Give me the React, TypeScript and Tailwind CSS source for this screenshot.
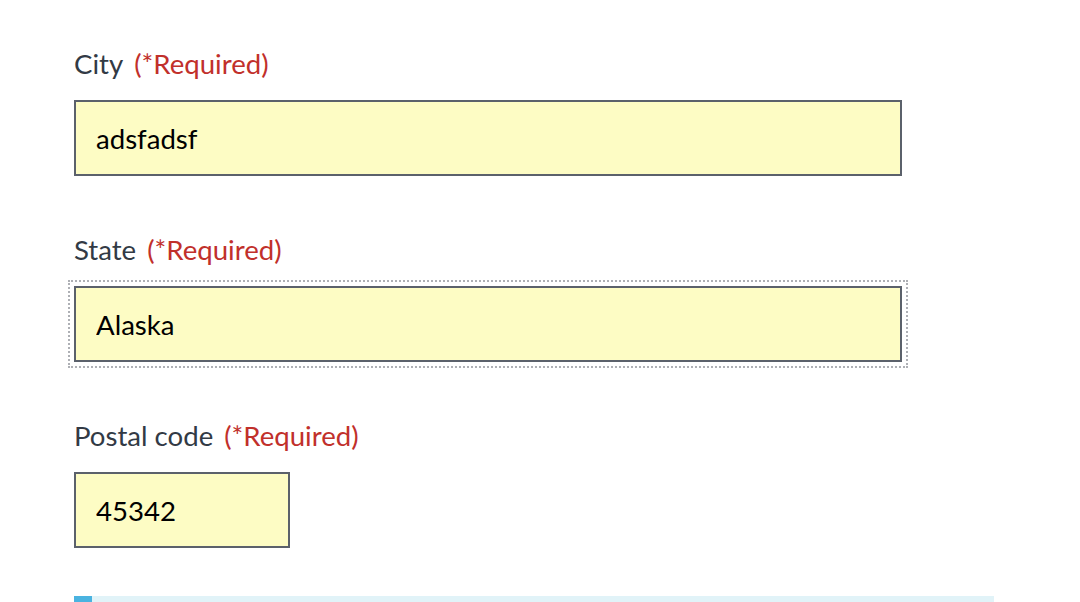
const fields = [
  { id: 'city', label: 'City', value: 'adsfadsf', width: 'w-[828px]', focused: false },
  { id: 'state', label: 'State', value: 'Alaska', width: 'w-[828px]', focused: true },
  { id: 'zip', label: 'Postal code', value: '45342', width: 'w-[216px]', focused: false },
]

export default function App() {
  return (
    <div className="h-[602px] w-[1080px] overflow-hidden bg-white pl-[74px] pt-[46px] font-['Lato','Open_Sans',sans-serif]">
      <div className="flex flex-col gap-[56px]">
        {fields.map((f) => (
          <div key={f.id}>
            <label htmlFor={f.id} className="flex h-[36px] items-center gap-[11px] text-[27.6px] leading-[36px] text-[#323a45]">
              {f.label}
              <span className="text-[#c1302b]">(*Required)</span>
            </label>
            <input
              id={f.id}
              readOnly
              value={f.value}
              className={`mt-[18px] box-border block h-[76px] ${f.width} border-2 border-[#5b616b] bg-[#fdfcc4] px-[20px] py-0 text-[27.6px] leading-[36px] text-black ${
                f.focused ? 'outline-2 outline-offset-4 outline-dotted outline-[#aeb0b5]' : 'outline-none'
              }`}
            />
          </div>
        ))}
      </div>
      <div className="mt-[48px] flex h-[6px] w-[920px] bg-[#e1f3f8]">
        <div className="h-[6px] w-[18px] bg-[#4ab3e0]" />
      </div>
    </div>
  )
}
